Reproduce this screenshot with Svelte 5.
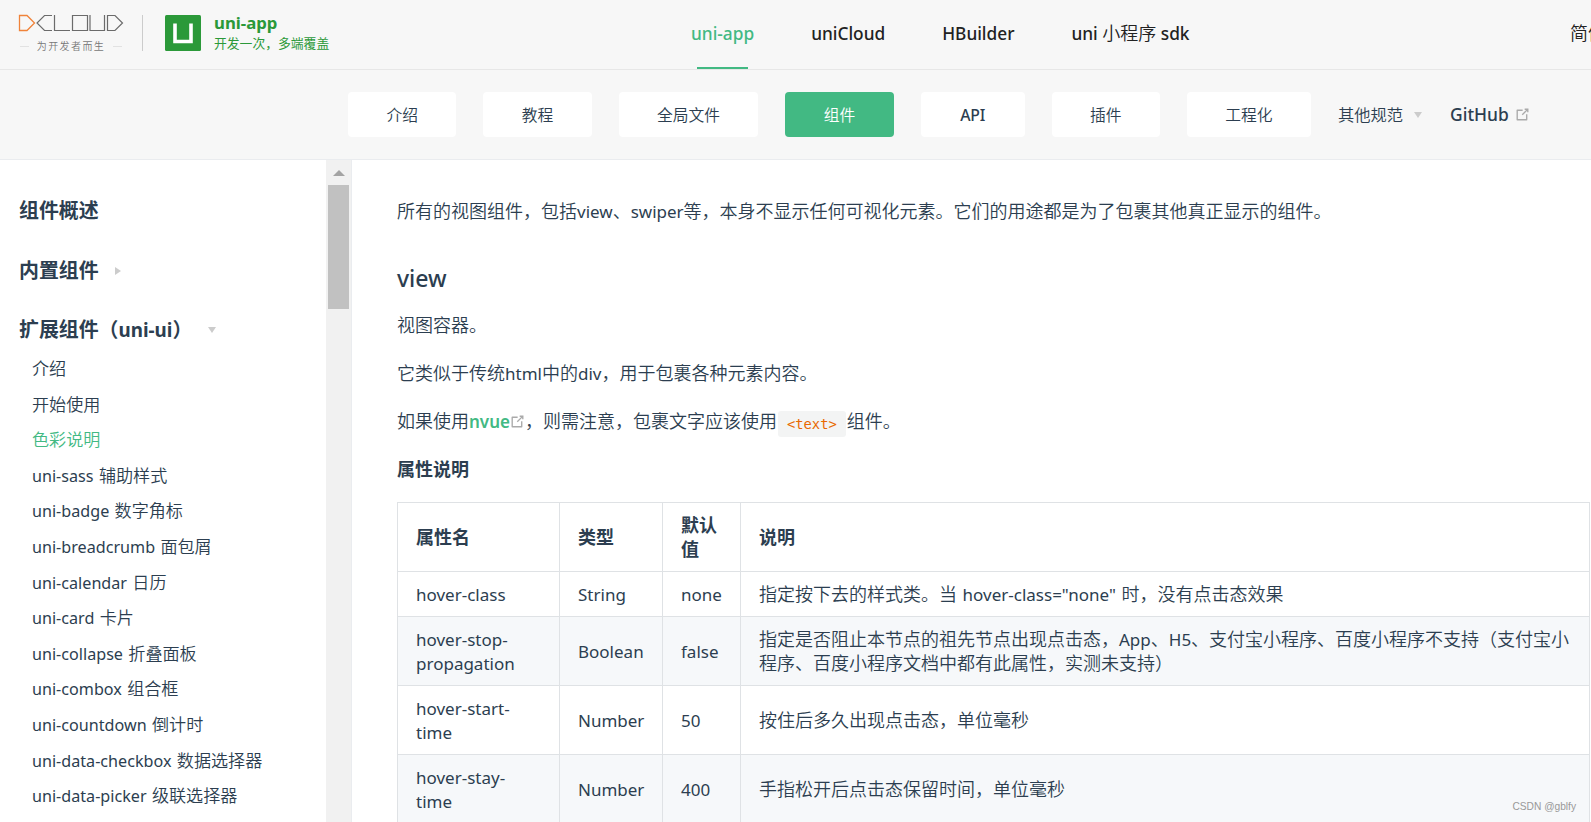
<script>
  const topNav = ['uni-app', 'uniCloud', 'HBuilder', 'uni 小程序 sdk'];
  const subNav = ['介绍', '教程', '全局文件', '组件', 'API', '插件', '工程化'];

  const sidebarItems = [
    '介绍',
    '开始使用',
    '色彩说明',
    'uni-sass 辅助样式',
    'uni-badge 数字角标',
    'uni-breadcrumb 面包屑',
    'uni-calendar 日历',
    'uni-card 卡片',
    'uni-collapse 折叠面板',
    'uni-combox 组合框',
    'uni-countdown 倒计时',
    'uni-data-checkbox 数据选择器',
    'uni-data-picker 级联选择器'
  ];

  const rows = [
    ['hover-class', 'String', 'none', '指定按下去的样式类。当 hover-class="none" 时，没有点击态效果'],
    ['hover-stop-propagation', 'Boolean', 'false', '指定是否阻止本节点的祖先节点出现点击态，App、H5、支付宝小程序、百度小程序不支持（支付宝小程序、百度小程序文档中都有此属性，实测未支持）'],
    ['hover-start-time', 'Number', '50', '按住后多久出现点击态，单位毫秒'],
    ['hover-stay-time', 'Number', '400', '手指松开后点击态保留时间，单位毫秒']
  ];

  let activeTop = $state('uni-app');
  let activeSub = $state('组件');
  let activeItem = $state('色彩说明');

  // latin runs are set slightly smaller than the chinese around them
  function split(text) {
    return text.split(/([\x20-\x7e]+)/).filter(Boolean);
  }
</script>

{#snippet mixed(text)}{#each split(text) as part}{#if /^[\x20-\x7e]/.test(part)}<span class="en">{part}</span>{:else}{part}{/if}{/each}{/snippet}

{#snippet outbound()}
  <svg class="outbound" viewBox="0 0 100 100" width="17" height="17">
    <path fill="currentColor" d="M18.8,85.1h56l0,0c2.2,0,4-1.8,4-4v-32h-8v28h-48v-48h28v-8h-32l0,0c-2.2,0-4,1.8-4,4v56C14.8,83.3,16.6,85.1,18.8,85.1z" />
    <polygon fill="currentColor" points="45.7,48.7 51.3,54.3 77.2,28.5 77.2,37.2 85.2,37.2 85.2,14.9 62.8,14.9 62.8,22.9 71.5,22.9" />
  </svg>
{/snippet}

<div class="page">
  <header class="topbar">
    <div class="brand">
      <div class="dcloud">
        <svg width="106" height="18" viewBox="0 0 106 18" fill="none">
          <path stroke="#f0833a" stroke-width="1.3" d="M1.5 1.5H9L16.5 9L9 16.5H1.5Z" />
          <g stroke="#6b6b6b" stroke-width="1.2">
            <path d="M34 1.5H26.5L19 9L26.5 16.5H34" />
            <path d="M36.5 1V16.5H52" />
            <path d="M54.5 1.5H69.5V16.5H54.5Z" />
            <path d="M72 1V16.5H86.5V1" />
            <path d="M89.5 1.5H97L104.5 9L97 16.5H89.5Z" />
          </g>
        </svg>
        <div class="slogan"><i></i><span>为开发者而生</span><i></i></div>
      </div>
      <div class="divider"></div>
      <svg class="logo" width="36" height="36" viewBox="0 0 36 36">
        <rect width="36" height="36" rx="1.5" fill="#2b9939" />
        <path d="M10 8.5V26.5H26V8.5" fill="none" stroke="#fff" stroke-width="3.6" />
      </svg>
      <div class="brand-text">
        <strong>uni-app</strong>
        <span>开发一次，多端覆盖</span>
      </div>
    </div>
    <nav class="main-nav">
      {#each topNav as item}
        <button class:active={item === activeTop} onclick={() => (activeTop = item)}>{@render mixed(item)}</button>
      {/each}
    </nav>
    <span class="lang">简体中文</span>
  </header>

  <nav class="subbar">
    {#each subNav as item}
      <button class="pill" class:active={item === activeSub} onclick={() => (activeSub = item)}>{@render mixed(item)}</button>
    {/each}
    <span class="more">其他规范<i class="arrow down"></i></span>
    <span class="github">GitHub {@render outbound()}</span>
  </nav>

  <div class="body">
    <aside class="sidebar">
      <div class="menu">
        <h3>组件概述</h3>
        <h3>内置组件<i class="arrow right"></i></h3>
        <h3>扩展组件（{@render mixed('uni-ui')}）<i class="arrow down"></i></h3>
        <ul>
          {#each sidebarItems as item}
            <li><button class:active={item === activeItem} onclick={() => (activeItem = item)}>{@render mixed(item)}</button></li>
          {/each}
        </ul>
      </div>
      <div class="scrollbar">
        <i class="up"></i>
        <div class="thumb"></div>
      </div>
    </aside>

    <main>
      <p>{@render mixed('所有的视图组件，包括view、swiper等，本身不显示任何可视化元素。它们的用途都是为了包裹其他真正显示的组件。')}</p>
      <h2>view</h2>
      <p>视图容器。</p>
      <p>{@render mixed('它类似于传统html中的div，用于包裹各种元素内容。')}</p>
      <p>如果使用<a href="#nvue">nvue</a>{@render outbound()}，则需注意，包裹文字应该使用<code>&lt;text&gt;</code>组件。</p>
      <p><strong>属性说明</strong></p>
      <table>
        <colgroup><col class="c1" /><col class="c2" /><col class="c3" /><col /></colgroup>
        <thead>
          <tr><th>属性名</th><th>类型</th><th>默认值</th><th>说明</th></tr>
        </thead>
        <tbody>
          {#each rows as row}
            <tr>
              {#each row as cell}<td>{@render mixed(cell)}</td>{/each}
            </tr>
          {/each}
        </tbody>
      </table>
    </main>
  </div>
  <span class="watermark">CSDN @gblfy</span>
</div>

<style>
  :global(body) {
    overflow: hidden;
  }

  .page {
    position: relative;
    display: flex;
    flex-direction: column;
    width: 1591px;
    height: 822px;
    overflow: hidden;
    background: #fff;
    color: #2c3e50;
    font-family: 'Noto Sans', 'Noto Sans CJK SC', sans-serif;
    font-size: 18px;
    font-weight: 350;
    line-height: 24px;
  }

  button {
    padding: 0;
    border: none;
    background: none;
    color: inherit;
    font: inherit;
    white-space: nowrap;
    cursor: pointer;
  }

  strong {
    font-weight: 700;
  }

  .en {
    font-size: 0.945em;
    line-height: 1;
    word-spacing: 0.07em;
  }

  li .en,
  p .en,
  td .en {
    font-weight: 400;
  }

  .topbar {
    flex: none;
    display: flex;
    height: 69px;
    border-bottom: 1px solid #e7e7e7;
    background: #f7f7f7;
    color: #222;
  }

  .brand {
    flex: none;
    display: flex;
    align-items: flex-start;
    width: 673px;
    padding: 14px 0 0 18px;
    box-sizing: border-box;
  }

  .dcloud {
    width: 106px;
  }

  .dcloud svg {
    display: block;
  }

  .slogan {
    display: flex;
    align-items: center;
    justify-content: space-between;
    height: 14px;
    margin: 7px 2px 0;
    color: #777;
    font-size: 10px;
    line-height: 14px;
    letter-spacing: 1.4px;
  }

  .slogan i {
    width: 9px;
    height: 1px;
    background: #e2e2e2;
  }

  .divider {
    width: 1px;
    height: 36px;
    margin: 1px 22px 0 18px;
    background: #ccc;
  }

  .logo {
    margin-top: 1px;
  }

  .brand-text {
    display: flex;
    flex-direction: column;
    margin-left: 13px;
    color: #2b9939;
  }

  .brand-text strong {
    height: 20px;
    font-size: 16.8px;
    line-height: 18px;
  }

  .brand-text span {
    font-size: 12.8px;
    font-weight: 400;
    line-height: 18px;
  }

  .main-nav {
    display: flex;
    gap: 57px;
    padding-left: 18px;
  }

  .main-nav button {
    position: relative;
    height: 69px;
    padding-bottom: 3px;
  }

  .main-nav .en {
    font-size: 0.96em;
    font-weight: 500;
    word-spacing: 0;
  }

  .main-nav .active {
    color: #42b983;
  }

  .main-nav .active::after {
    content: '';
    position: absolute;
    left: 6px;
    right: 6px;
    bottom: 0;
    height: 2px;
    background: #42b983;
  }

  .lang {
    flex: none;
    margin-left: auto;
    margin-right: -51px;
    line-height: 67px;
  }

  .subbar {
    flex: none;
    display: flex;
    align-items: center;
    height: 89px;
    padding-left: 348px;
    border-bottom: 1px solid #eaecef;
    background: #f7f7f7;
  }

  .pill {
    min-width: 104px;
    height: 45px;
    margin-right: 27px;
    padding: 0 38.4px;
    border-radius: 4px;
    background: #fff;
    font-size: 15.75px;
  }

  .pill .en {
    font-size: 1em;
    font-weight: 500;
    letter-spacing: -0.3px;
  }

  .pill.active {
    background: #42b983;
    color: #fff;
  }

  .more {
    display: flex;
    align-items: center;
    font-size: 16.3px;
  }

  .more .arrow {
    margin-left: 11px;
  }

  .github {
    margin: -1px 0 0 28px;
    font-size: 17.4px;
    font-weight: 500;
  }

  .github .outbound {
    margin-left: 1px;
  }

  .outbound {
    position: relative;
    top: 2px;
    margin: 0 -1px;
    color: #aaa;
  }

  .arrow {
    display: inline-block;
    width: 0;
    height: 0;
  }

  .arrow.down {
    border-left: 4.5px solid transparent;
    border-right: 4.5px solid transparent;
    border-top: 6px solid #ccc;
  }

  .arrow.right {
    border-top: 4.5px solid transparent;
    border-bottom: 4.5px solid transparent;
    border-left: 6px solid #ccc;
  }

  .body {
    flex: 1;
    display: flex;
    min-height: 0;
  }

  .sidebar {
    flex: none;
    display: flex;
    width: 351px;
    border-right: 1px solid #eaecef;
  }

  .menu {
    flex: 1;
    padding: 36px 0 0 19px;
    overflow: hidden;
  }

  h3 {
    display: flex;
    align-items: center;
    height: 30px;
    margin: 0 0 29.5px;
    font-size: 19.9px;
  }

  h3 .arrow {
    margin-left: 16px;
  }

  ul {
    margin: -23.5px 0 0;
    padding: 0 0 0 13px;
    list-style: none;
  }

  li {
    height: 35.6px;
    font-size: 17.1px;
    line-height: 35.6px;
  }

  li .active {
    color: #42b983;
  }

  .scrollbar {
    display: flex;
    flex-direction: column;
    align-items: center;
    width: 25px;
    background: #f1f1f1;
  }

  .up {
    margin: 10px 0 9px;
    border-left: 6px solid transparent;
    border-right: 6px solid transparent;
    border-bottom: 6px solid #a3a3a3;
  }

  .thumb {
    width: 21px;
    height: 124px;
    background: #c1c1c1;
  }

  main {
    flex: none;
    width: 1193px;
    padding: 36px 0 0 45px;
  }

  p {
    height: 31px;
    margin: 0 0 17px;
    line-height: 31px;
    white-space: nowrap;
  }

  h2 {
    height: 36px;
    margin: 33px 0 14px;
    font-size: 23px;
    font-weight: 500;
    line-height: 36px;
  }

  a {
    color: #42b983;
    font-size: 17px;
    font-weight: 600;
    text-decoration: none;
  }

  code {
    position: relative;
    top: 1px;
    margin: 0 1px;
    padding: 5px 9px;
    border-radius: 3px;
    background: #f3f4f4;
    color: #e96900;
    font-family: 'DejaVu Sans Mono', monospace;
    font-size: 13.8px;
    font-weight: 400;
  }

  table {
    width: 1193px;
    table-layout: fixed;
    border-collapse: collapse;
  }

  .c1 {
    width: 162px;
  }

  .c2 {
    width: 103px;
  }

  .c3 {
    width: 78px;
  }

  th,
  td {
    padding: 10px 18px;
    border: 1px solid #dfe2e5;
    text-align: left;
  }

  td:first-child {
    padding-right: 24px;
  }

  tbody tr:nth-child(2n) {
    background: #f6f8fa;
  }

  .watermark {
    position: absolute;
    right: 15px;
    bottom: 5px;
    color: #999;
    font-family: 'Liberation Sans', sans-serif;
    font-size: 10.2px;
    font-weight: 400;
    line-height: 20px;
  }
</style>
